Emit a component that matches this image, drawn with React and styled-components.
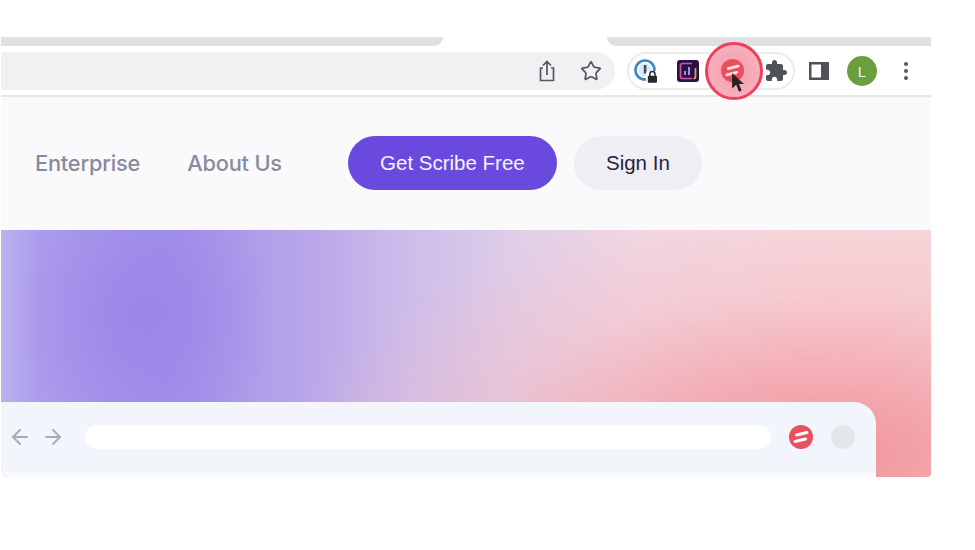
import React from "react";
import styled, { createGlobalStyle } from "styled-components";
import { ArrowLeft, ArrowRight, Star } from "lucide-react";

const GlobalStyle = createGlobalStyle`
  html, body {
    margin: 0;
    background: #fff;
    font-family: "Liberation Sans", Arial, sans-serif;
  }
  * { box-sizing: border-box; }
`;

const Frame = styled.div`
  width: 930px;
  margin: 37px 0 0 1px;
`;

const TabStrip = styled.div`
  display: flex;
  justify-content: space-between;
  height: 9px;
`;

const Tab = styled.div`
  width: ${props => props.w}px;
  background: #dee0e4;
  border-radius: ${props => (props.right ? "0 0 0 12px" : "0 0 12px 0")};
`;

const Toolbar = styled.div`
  display: flex;
  align-items: center;
  height: 51px;
  padding-top: 1px;
  border-bottom: 2px solid #e6e6ea;
`;

const Omnibox = styled.div`
  display: flex;
  align-items: center;
  justify-content: flex-end;
  gap: 23px;
  width: 614px;
  height: 38px;
  padding-right: 13px;
  background: #f0f1f3;
  border-radius: 0 19px 19px 0;
  color: #55585d;
`;

const ExtensionPill = styled.div`
  position: relative;
  display: flex;
  align-items: center;
  width: 168px;
  height: 38px;
  margin-left: 12px;
  padding-left: 4px;
  border: 2px solid #ececef;
  border-radius: 19px;
`;

const ExtSlot = styled.div`
  display: flex;
  align-items: center;
  justify-content: center;
  width: ${props => props.w}px;
  height: 30px;
  flex: none;
`;

const Highlight = styled.div`
  position: absolute;
  left: 76px;
  top: -12px;
  width: 58px;
  height: 58px;
  padding: 0 4px 2px 0;
  border-radius: 50%;
  border: 3px solid #f2405c;
  background: radial-gradient(circle, #f2a0ad 0%, #f5aab6 50%, #f9bcc6 100%);
  display: flex;
  align-items: center;
  justify-content: center;
`;

const CursorMark = styled.svg`
  position: absolute;
  left: 23px;
  top: 27px;
`;

const ToolbarEnd = styled.div`
  display: flex;
  align-items: center;
  margin-left: 14px;
  color: #4f5257;
`;

const Avatar = styled.div`
  display: flex;
  align-items: center;
  justify-content: center;
  width: 30px;
  height: 30px;
  margin-left: 18px;
  border-radius: 50%;
  background: #6b9e3e;
  color: #eef4e6;
  font-size: 15px;
`;

const MoreDots = styled.div`
  display: flex;
  flex-direction: column;
  gap: 3px;
  margin-left: 27px;
`;

const Dot = styled.span`
  width: 4px;
  height: 4px;
  border-radius: 50%;
  background: #55585d;
`;

const Nav = styled.nav`
  display: flex;
  align-items: center;
  height: 133px;
  padding-left: 34px;
  background: #fafafc;
`;

const NavLink = styled.a`
  margin-right: 47px;
  padding-bottom: 2px;
  color: #8b8a9c;
  font-family: Inter, "Liberation Sans", sans-serif;
  font-size: 21.8px;
  font-weight: 500;
  letter-spacing: -0.2px;
`;

const PrimaryButton = styled.button`
  display: flex;
  align-items: center;
  justify-content: center;
  width: 209px;
  height: 54px;
  margin: 0 0 1px 19px;
  border: 0;
  border-radius: 27px;
  background: #6a4ade;
  color: #f6f3ff;
  font-family: inherit;
  font-size: 20.5px;
`;

const SecondaryButton = styled(PrimaryButton)`
  width: 128px;
  margin-left: 17px;
  background: #efeef3;
  color: #27233f;
`;

const Hero = styled.section`
  display: flex;
  flex-direction: column;
  justify-content: flex-end;
  height: 247px;
  border-radius: 0 0 4px 8px;
  overflow: hidden;
  background:
    radial-gradient(ellipse 130px 150px at 145px 85px, #9a86e8 0%, rgba(154, 134, 232, 0) 100%),
    radial-gradient(ellipse 540px 250px at 820px 225px, #f0929a 0%, rgba(243, 160, 168, 0.8) 30%, rgba(245, 185, 192, 0.4) 65%, rgba(245, 190, 195, 0) 100%),
    linear-gradient(90deg, #bcb0ee 0%, #ad9dec 4%, #a291ea 18%, #b8a6e9 33%, #cdbdea 44%, #dfcde8 55%, #f0d7e3 68%, #f6d8dd 85%, #f6d7db 100%);
`;

const MockBrowser = styled.div`
  display: flex;
  align-items: center;
  width: 875px;
  height: 75px;
  padding: 0 21px 0 7px;
  background: #f2f5fb;
  border-radius: 0 22px 0 8px;
  border-bottom: 5px solid #f8fafd;
`;

const MockNav = styled.div`
  display: flex;
  gap: 9px;
  color: #a3abbc;
`;

const MockAddress = styled.div`
  flex: 1;
  height: 24px;
  margin: 0 18px 0 20px;
  background: #fff;
  border-radius: 12px;
`;

const MockAvatar = styled.div`
  width: 24px;
  height: 24px;
  margin-left: 18px;
  border-radius: 50%;
  background: #e3e7eb;
`;

const ScribeLogo = ({ size, bg, bar }) => (
  <svg width={size} height={size} viewBox="0 0 24 24">
    <circle cx="12" cy="12" r="12" fill={bg} />
    <g stroke={bar} strokeWidth="2.9" strokeLinecap="round">
      <line x1="7.5" y1="10" x2="18" y2="7.5" />
      <line x1="6" y1="16.5" x2="16.5" y2="14" />
    </g>
  </svg>
);

const ShareIcon = () => (
  <svg width="20" height="24" viewBox="0 0 20 24" fill="none" stroke="currentColor" strokeWidth="1.7">
    <path d="M6 9H3.5v12.5h13V9H14" />
    <path d="M10 16V3M6 6.5L10 2.5l4 4" />
  </svg>
);

const PasswordIcon = () => (
  <svg width="26" height="26" viewBox="0 0 26 26" fill="none">
    <circle cx="12" cy="12" r="9.5" stroke="#3f87c9" strokeWidth="2.6" />
    <circle cx="12" cy="12" r="6.5" fill="#dbe8f4" />
    <rect x="10.8" y="7" width="2.6" height="8.5" fill="#35506c" />
    <rect x="13" y="13" width="13" height="13" rx="3" fill="#fff" />
    <path d="M16.8 18v-1.8a2.6 2.6 0 0 1 5.2 0V18" stroke="#26282c" strokeWidth="1.5" />
    <rect x="14.8" y="17.8" width="9.2" height="7" rx="1" fill="#26282c" />
  </svg>
);

const MetricsIcon = () => (
  <svg width="22" height="22" viewBox="0 0 22 22" fill="none">
    <rect width="22" height="22" rx="3" fill="#2a1248" />
    <path d="M15 3.5H5.5a2 2 0 0 0-2 2v11a2 2 0 0 0 2 2H15" stroke="#c55d9c" strokeWidth="1.7" />
    <path d="M18.5 8v8.5a2 2 0 0 1-2 2" stroke="#e3a64c" strokeWidth="1.7" />
    <path d="M8 15v-4M12 15V7" stroke="#a98be0" strokeWidth="2" />
  </svg>
);

const PuzzleIcon = () => (
  <svg width="24" height="24" viewBox="0 0 24 24" fill="#4f5257">
    <path d="M20.5 11H19V7c0-1.1-.9-2-2-2h-4V3.5C13 2.12 11.88 1 10.5 1S8 2.12 8 3.5V5H4c-1.1 0-1.99.9-1.99 2v3.8H3.5c1.49 0 2.7 1.21 2.7 2.7s-1.21 2.7-2.7 2.7H2V20c0 1.1.9 2 2 2h3.8v-1.5c0-1.49 1.21-2.7 2.7-2.7 1.49 0 2.7 1.21 2.7 2.7V22H17c1.1 0 2-.9 2-2v-4h1.5c1.38 0 2.5-1.12 2.5-2.5S21.88 11 20.5 11z" />
  </svg>
);

const SidePanelIcon = () => (
  <svg width="20" height="18" viewBox="0 0 20 18">
    <path fillRule="evenodd" fill="#4f5257" d="M0 0h20v18H0zM2.5 2.5v13H12v-13z" />
  </svg>
);

const Cursor = () => (
  <CursorMark width="15" height="22" viewBox="0 0 16 24">
    <path d="M1 1v17l4.5-4 3 7.5 3-1.3-3-7.2H14z" fill="#2b2326" />
  </CursorMark>
);

export default function App() {
  return (
    <>
      <GlobalStyle />
      <Frame>
        <TabStrip>
          <Tab w={442} />
          <Tab w={324} right />
        </TabStrip>
        <Toolbar>
          <Omnibox>
            <ShareIcon />
            <Star size={22} strokeWidth={1.9} />
          </Omnibox>
          <ExtensionPill>
            <ExtSlot w={26}>
              <PasswordIcon />
            </ExtSlot>
            <ExtSlot w={58}>
              <MetricsIcon />
            </ExtSlot>
            <Highlight>
              <ScribeLogo size={23} bg="#e9505f" bar="#fbdfe2" />
              <Cursor />
            </Highlight>
            <ExtSlot w={38} />
            <ExtSlot w={42}>
              <PuzzleIcon />
            </ExtSlot>
          </ExtensionPill>
          <ToolbarEnd>
            <SidePanelIcon />
            <Avatar>L</Avatar>
            <MoreDots>
              <Dot />
              <Dot />
              <Dot />
            </MoreDots>
          </ToolbarEnd>
        </Toolbar>
        <Nav>
          <NavLink>Enterprise</NavLink>
          <NavLink>About Us</NavLink>
          <PrimaryButton>Get Scribe Free</PrimaryButton>
          <SecondaryButton>Sign In</SecondaryButton>
        </Nav>
        <Hero>
          <MockBrowser>
            <MockNav>
              <ArrowLeft size={24} strokeWidth={1.9} />
              <ArrowRight size={24} strokeWidth={1.9} />
            </MockNav>
            <MockAddress />
            <ScribeLogo size={24} bg="#e9505d" bar="#fff" />
            <MockAvatar />
          </MockBrowser>
        </Hero>
      </Frame>
    </>
  );
}
